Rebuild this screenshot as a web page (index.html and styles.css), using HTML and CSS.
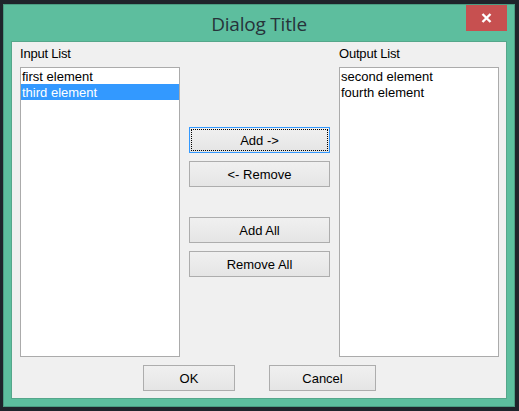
FILE: index.html
```html
<!DOCTYPE html>
<html>
<head>
<meta charset="utf-8">
<link rel="stylesheet" href="styles.css">
</head>
<body>
<div class="desk">
  <div class="window">
    <div class="titlebar">
      <div class="spacer"></div>
      <div class="title">Dialog Title</div>
      <div class="tb-right">
        <div class="close">
          <svg width="11" height="10" viewBox="0 0 11 10"><path d="M1.5 1 L9.5 9 M9.5 1 L1.5 9" stroke="#fff" stroke-width="2.4" fill="none"/></svg>
        </div>
      </div>
    </div>
    <div class="panel">
      <div class="cols">
        <div class="label">Input List</div>
        <div></div>
        <div class="label">Output List</div>
        <div class="list">
          <div class="item">first element</div>
          <div class="item selected">third element</div>
        </div>
        <div class="mid">
          <button class="btn focused"><span class="focus">Add -&gt;</span></button>
          <button class="btn">&lt;- Remove</button>
          <button class="btn spaced">Add All</button>
          <button class="btn">Remove All</button>
        </div>
        <div class="list">
          <div class="item">second element</div>
          <div class="item">fourth element</div>
        </div>
      </div>
      <div class="actions">
        <button class="btn ok">OK</button>
        <button class="btn cancel">Cancel</button>
      </div>
    </div>
  </div>
</div>
</body>
</html>
```
FILE: styles.css
```css
html, body {
  margin: 0;
  padding: 0;
  background: #1f242b;
}
.desk {
  width: 519px;
  height: 411px;
  padding: 4px 0 0 3px;
  box-sizing: border-box;
}
.window {
  width: 512px;
  height: 403px;
  box-sizing: border-box;
  background: #5dbe9e;
  border: 1px solid #4b9c82;
  padding: 0 7px 7px 7px;
  display: flex;
  flex-direction: column;
}
.titlebar {
  height: 36px;
  display: grid;
  grid-template-columns: 1fr auto 1fr;
}
.title {
  font-family: "Open Sans", "Noto Sans", sans-serif;
  font-size: 19px;
  color: #27333a;
  line-height: 36px;
  padding-top: 1px;
  letter-spacing: -0.2px;
}
.tb-right {
  display: flex;
  justify-content: flex-end;
  align-items: flex-start;
}
.close {
  width: 41px;
  height: 26px;
  background: #c75050;
  display: flex;
  align-items: center;
  justify-content: center;
}
.panel {
  flex: 1;
  background: #f0f0f0;
  border: 1px solid #55a78b;
  padding: 0 7px 7px 8px;
  display: flex;
  flex-direction: column;
  font-family: "Liberation Sans", Arial, sans-serif;
  font-size: 13px;
  color: #000;
}
.cols {
  display: grid;
  grid-template-columns: 160px 141px 160px;
  grid-template-rows: 25px 290px;
  column-gap: 9px;
}
.label {
  padding-top: 4px;
  line-height: 16px;
  letter-spacing: -0.2px;
}
.list {
  background: #fff;
  border: 1px solid #ababab;
  box-sizing: border-box;
}
.item {
  height: 16px;
  line-height: 17px;
  padding-left: 1px;
}
.item.selected {
  background: #3399ff;
  color: #fff;
}
.mid {
  display: flex;
  flex-direction: column;
  padding-top: 60px;
  gap: 8px;
}
.btn {
  height: 26px;
  box-sizing: border-box;
  border: 1px solid #adadad;
  background: linear-gradient(#f0f0f0, #e5e5e5);
  font-family: "Liberation Sans", Arial, sans-serif;
  font-size: 13px;
  color: #000;
  padding: 0;
  margin: 0;
  display: flex;
  align-items: center;
  justify-content: center;
}
.btn.spaced {
  margin-top: 22px;
}
.btn.focused {
  border-color: #3399ff;
  padding: 1px;
  align-items: stretch;
  justify-content: stretch;
}
.focus {
  flex: 1;
  border: 1px dotted #000;
  display: flex;
  align-items: center;
  justify-content: center;
}
.actions {
  margin-top: 8px;
  display: flex;
  justify-content: center;
  gap: 34px;
}
.ok {
  width: 92px;
}
.cancel {
  width: 107px;
}
```
